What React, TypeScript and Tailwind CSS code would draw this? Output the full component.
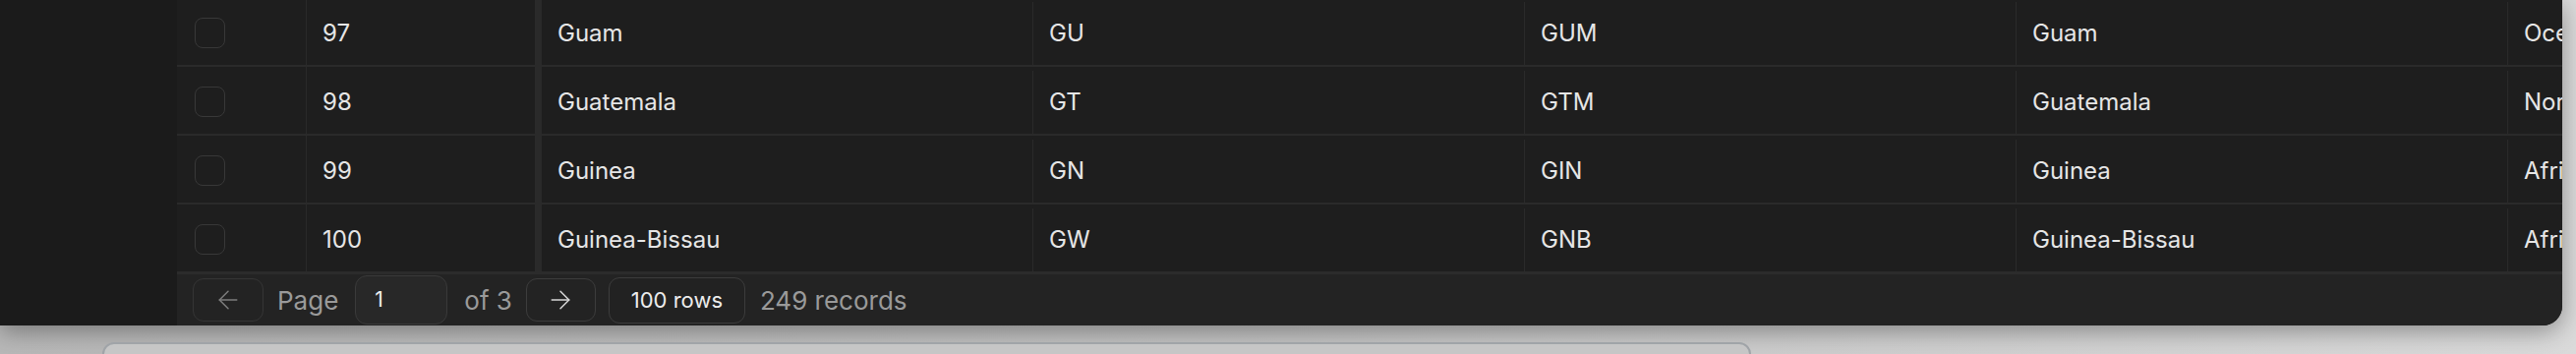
import { ArrowLeft, ArrowRight } from "lucide-react";

const rows = [
  { id: 97, name: "Guam", iso2: "GU", iso3: "GUM", local: "Guam", region: "Oceania" },
  { id: 98, name: "Guatemala", iso2: "GT", iso3: "GTM", local: "Guatemala", region: "North America" },
  { id: 99, name: "Guinea", iso2: "GN", iso3: "GIN", local: "Guinea", region: "Africa" },
  { id: 100, name: "Guinea-Bissau", iso2: "GW", iso3: "GNB", local: "Guinea-Bissau", region: "Africa" },
];

function Cell({ children }: { children: React.ReactNode }) {
  return (
    <div className="w-[500px] shrink-0 h-full flex items-center px-4 border-r border-[#2a2a2a] whitespace-nowrap">
      {children}
    </div>
  );
}

export default function App() {
  return (
    <div
      className="w-[2620px] h-[360px] overflow-hidden bg-linear-to-r from-[#b8b8b8] via-[#c4c4c4] to-[#dadada]"
      style={{ fontFamily: "Inter, 'Noto Sans', sans-serif" }}
    >
      <div className="w-[2606px] h-[331px] flex overflow-hidden rounded-br-[20px] bg-[#1e1e1e] shadow-[0_6px_24px_rgba(0,0,0,0.35)]">
        <div className="w-[180px] shrink-0 bg-[#1b1b1b]" />
        <div className="flex-1 min-w-0 flex flex-col">
          <div className="h-[276px] overflow-hidden flex flex-col justify-end">
            {rows.map((r) => (
              <div
                key={r.id}
                className="h-[70px] shrink-0 flex border-t-2 border-[#2a2a2a] text-[24px] text-[#e6e6e6]"
              >
                <div className="w-[132px] shrink-0 h-full flex items-center pl-[18px] pt-[2px] border-r border-[#2a2a2a]">
                  <div className="w-[31px] h-[31px] rounded-[8px] border-[1.5px] border-[#383838]" />
                </div>
                <div className="w-[239px] shrink-0 h-full flex items-center px-4 pt-[4px] border-r-[7px] border-[#2a2a2a]">
                  {r.id}
                </div>
                <div className="flex h-full pt-[4px]">
                  <Cell>{r.name}</Cell>
                  <Cell>{r.iso2}</Cell>
                  <Cell>{r.iso3}</Cell>
                  <Cell>{r.local}</Cell>
                  <Cell>{r.region}</Cell>
                </div>
              </div>
            ))}
          </div>
          <div className="flex-1 flex items-center pl-4 bg-[#232323] border-t-[3px] border-[#2b2b2b] text-[26px] text-[#9a9a9a]">
            <button className="w-[72px] h-[44px] flex items-center justify-center rounded-[11px] border-[1.5px] border-[#353535] text-[#7e7e7e]">
              <ArrowLeft size={30} strokeWidth={1.2} />
            </button>
            <span className="ml-[14px]">Page</span>
            <div className="ml-[17px] w-[94px] h-[50px] flex items-center pl-[19px] rounded-[12px] border-[1.5px] border-[#3a3a3a] bg-[#282828] text-[21px] text-[#eeeeee]">
              1
            </div>
            <span className="ml-[17px]">of 3</span>
            <button className="ml-[14px] w-[71px] h-[44px] flex items-center justify-center rounded-[11px] border-[1.5px] border-[#3c3c3c] text-[#d8d8d8]">
              <ArrowRight size={30} strokeWidth={1.2} />
            </button>
            <button className="ml-[13px] w-[139px] h-[47px] flex items-center justify-center rounded-[11px] border-[1.5px] border-[#3c3c3c] bg-[#222222] text-[22px] text-[#ececec]">
              100 rows
            </button>
            <span className="ml-[15px]">249 records</span>
          </div>
        </div>
      </div>
      <div className="pl-[104px] pt-[17px]">
        <div className="w-[1677px] h-[40px] rounded-t-[12px] border-2 border-[#a0a4a8] bg-[#c6c6c6]" />
      </div>
    </div>
  );
}
